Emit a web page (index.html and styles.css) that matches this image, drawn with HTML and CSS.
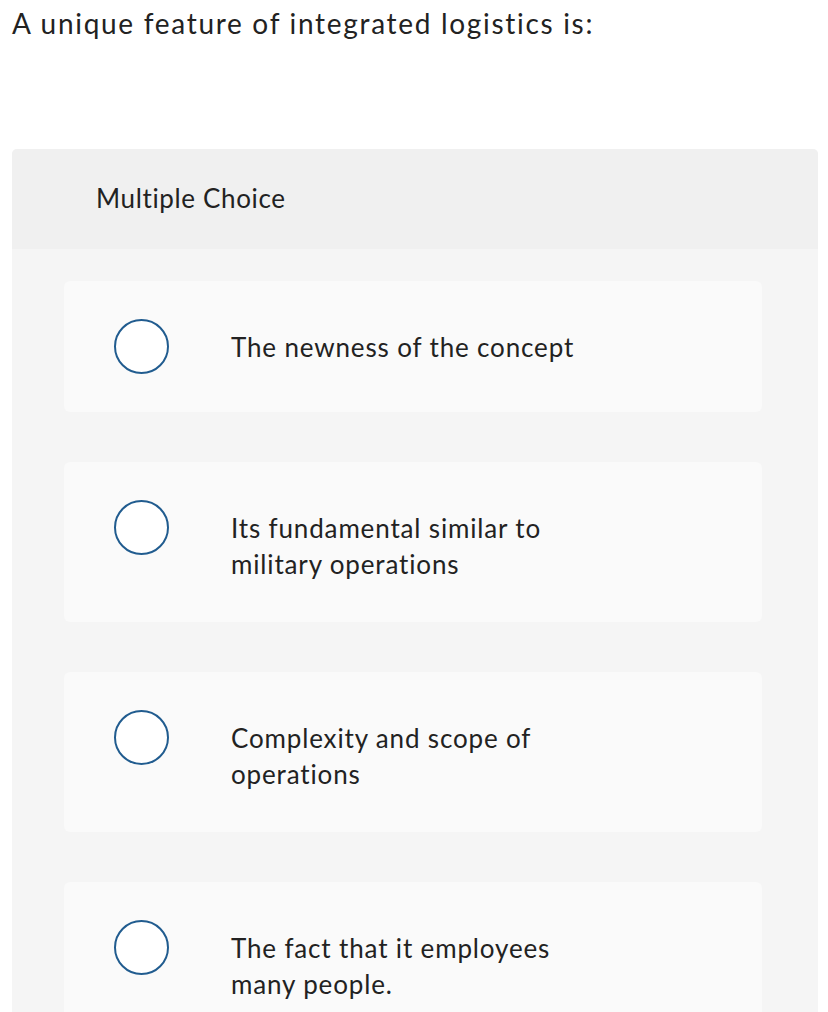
FILE: index.html
```html
<!DOCTYPE html>
<html lang="en">
<head>
<meta charset="utf-8">
<title>Multiple Choice</title>
<link rel="stylesheet" href="styles.css">
</head>
<body>
<h1 class="question">A unique feature of integrated logistics is:</h1>
<section class="panel">
  <header class="panel-head">Multiple Choice</header>
  <div class="options">
    <label class="option">
      <span class="radio"></span>
      <span class="option-text">The newness of the concept</span>
    </label>
    <label class="option">
      <span class="radio"></span>
      <span class="option-text">Its fundamental similar to<br>military operations</span>
    </label>
    <label class="option">
      <span class="radio"></span>
      <span class="option-text">Complexity and scope of<br>operations</span>
    </label>
    <label class="option">
      <span class="radio"></span>
      <span class="option-text">The fact that it employees<br>many people.</span>
    </label>
  </div>
</section>
</body>
</html>
```

FILE: styles.css
```css
html, body {
  margin: 0;
  padding: 0;
  background: #ffffff;
}

body {
  padding: 0 10px 0 12px;
  font-family: Lato, "Liberation Sans", sans-serif;
  font-variant-ligatures: none;
  color: #222222;
}

.question {
  margin: 7px 0 0;
  font-size: 28px;
  font-weight: 400;
  line-height: 1.2;
  letter-spacing: 1.7px;
  color: #222222;
}

.panel {
  margin-top: 108px;
  background: #f5f5f5;
  border-radius: 5px 5px 0 0;
  overflow: hidden;
}

.panel-head {
  height: 100px;
  display: flex;
  align-items: center;
  padding-left: 84px;
  background: #f0f0f0;
  font-size: 26px;
  line-height: 1.2;
  letter-spacing: 0.65px;
}

.options {
  display: flex;
  flex-direction: column;
  gap: 50px;
  padding: 32px 56px 40px 52px;
}

.option {
  display: flex;
  align-items: flex-start;
  padding: 38px 0 38px 50px;
  background: #fafafa;
  border-radius: 6px;
}

.radio {
  flex: none;
  width: 51px;
  height: 51px;
  border: 2px solid #215c8f;
  border-radius: 50%;
  background: #ffffff;
}

.option-text {
  margin-left: 62px;
  padding: 10px 0 2px;
  font-size: 26px;
  line-height: 36px;
  letter-spacing: 0.85px;
  color: #222222;
}
```
